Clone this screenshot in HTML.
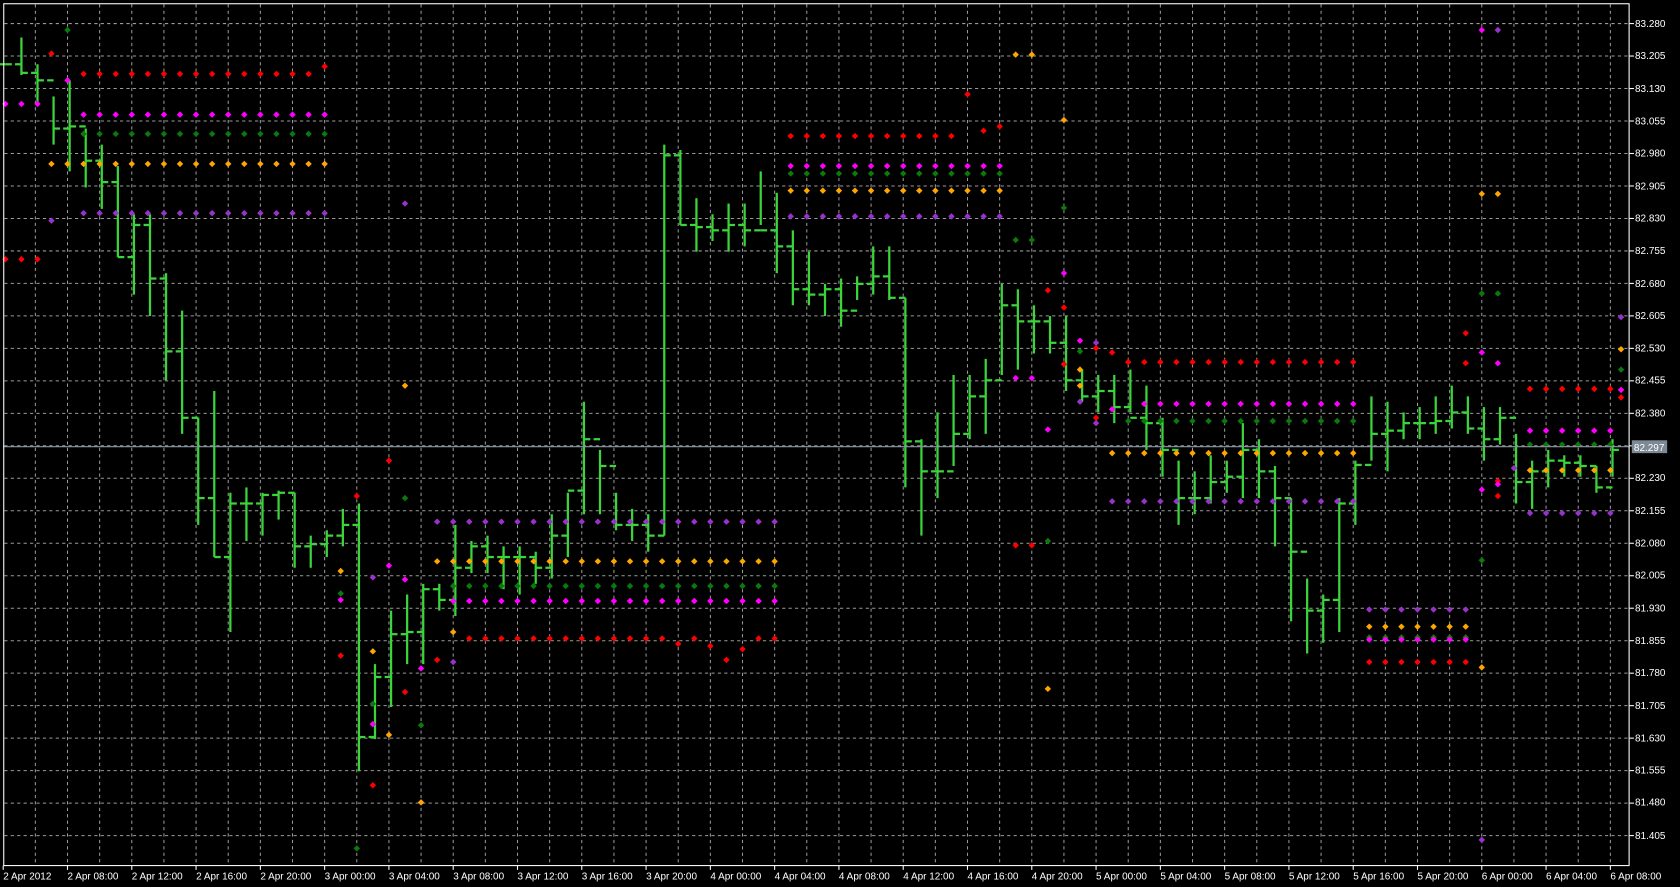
<!DOCTYPE html>
<html><head><meta charset="utf-8"><style>
html,body{margin:0;padding:0;background:#000;overflow:hidden}
svg{display:block}
text{font-family:"Liberation Sans",sans-serif;font-size:9.3px;fill:#fff}
</style></head><body>
<svg id="c" width="1680" height="887" viewBox="0 0 1568 828" preserveAspectRatio="none" xmlns="http://www.w3.org/2000/svg">
<rect x="0" y="0" width="1568" height="828" fill="#000"/>
<g id="grid"></g>
<g id="bars"></g>
<g id="dots"></g>
<line x1="3" y1="417" x2="1521" y2="417" stroke="#8a97a3" stroke-width="1"/>
<rect x="3.5" y="3.5" width="1517" height="804.5" fill="none" stroke="#fff" stroke-width="1"/>
<g id="ticks"></g>
<rect x="1523" y="411" width="33" height="12" fill="#7d8a95"/>
<text x="1525" y="421">82.297</text>
<g id="plabels">
<text x="1526" y="25">83.280</text><text x="1526" y="55">83.205</text><text x="1526" y="86">83.130</text><text x="1526" y="116">83.055</text><text x="1526" y="146">82.980</text><text x="1526" y="177">82.905</text><text x="1526" y="207">82.830</text><text x="1526" y="237">82.755</text><text x="1526" y="268">82.680</text><text x="1526" y="298">82.605</text><text x="1526" y="328">82.530</text><text x="1526" y="358">82.455</text><text x="1526" y="389">82.380</text><text x="1526" y="449">82.230</text><text x="1526" y="480">82.155</text><text x="1526" y="510">82.080</text><text x="1526" y="540">82.005</text><text x="1526" y="571">81.930</text><text x="1526" y="601">81.855</text><text x="1526" y="631">81.780</text><text x="1526" y="662">81.705</text><text x="1526" y="692">81.630</text><text x="1526" y="722">81.555</text><text x="1526" y="752">81.480</text><text x="1526" y="783">81.405</text>
</g>
<g id="tlabels">
<text x="3" y="821">2 Apr 2012</text><text x="63" y="821">2 Apr 08:00</text><text x="123" y="821">2 Apr 12:00</text><text x="183" y="821">2 Apr 16:00</text><text x="243" y="821">2 Apr 20:00</text><text x="303" y="821">3 Apr 00:00</text><text x="363" y="821">3 Apr 04:00</text><text x="423" y="821">3 Apr 08:00</text><text x="483" y="821">3 Apr 12:00</text><text x="543" y="821">3 Apr 16:00</text><text x="603" y="821">3 Apr 20:00</text><text x="663" y="821">4 Apr 00:00</text><text x="723" y="821">4 Apr 04:00</text><text x="783" y="821">4 Apr 08:00</text><text x="843" y="821">4 Apr 12:00</text><text x="903" y="821">4 Apr 16:00</text><text x="963" y="821">4 Apr 20:00</text><text x="1023" y="821">5 Apr 00:00</text><text x="1083" y="821">5 Apr 04:00</text><text x="1143" y="821">5 Apr 08:00</text><text x="1203" y="821">5 Apr 12:00</text><text x="1263" y="821">5 Apr 16:00</text><text x="1323" y="821">5 Apr 20:00</text><text x="1383" y="821">6 Apr 00:00</text><text x="1443" y="821">6 Apr 04:00</text><text x="1503" y="821">6 Apr 08:00</text>
</g>
</svg>
<script>
var NS="http://www.w3.org/2000/svg";
function el(p,t,a){var e=document.createElementNS(NS,t);for(var k in a)e.setAttribute(k,a[k]);document.getElementById(p).appendChild(e);}
for(var x=33;x<1521;x+=30)el("grid","line",{x1:x,y1:4,x2:x,y2:808,stroke:"#9a9a9a","stroke-width":0.95,"stroke-dasharray":"3,3"});
for(var i=0;i<26;i++){var y=22+i*30.32;el("grid","line",{x1:4,y1:y,x2:1521,y2:y,stroke:"#9a9a9a","stroke-width":0.95,"stroke-dasharray":"3,3"});el("ticks","line",{x1:1521,y1:y,x2:1525,y2:y,stroke:"#fff","stroke-width":1});}
for(var i=0;i<26;i++){var x=3+i*60;el("ticks","line",{x1:x,y1:808,x2:x,y2:812,stroke:"#fff","stroke-width":1});}
var B=[[60,60,60],[35,70,68],[60,95,75],[90,135,120],[75,160,118],[120,175,150],[135,195,170],[155,240,240],[200,275,210],[200,295,260],[255,355,328],[290,405,390],[390,490,465],[365,520,520],[460,590,470],[455,505,470],[460,500,462],[458,485,460],[460,530,510],[500,530,508],[495,520,500],[475,510,490],[470,720,688],[620,690,632],[570,660,592],[555,620,590],[545,620,550],[545,570,560],[490,575,530],[505,535,510],[500,535,520],[510,550,520],[510,555,520],[515,545,530],[480,540,500],[460,520,458],[375,480,410],[420,480,435],[460,495,490],[475,505,490],[480,515,500],[135,500,145],[140,210,210],[185,235,212],[200,225,215],[190,235,210],[190,230,215],[160,210,215],[180,255,230],[215,285,270],[235,285,275],[265,295,270],[260,305,290],[258,280,265],[230,275,258],[230,280,278],[278,455,412],[410,500,440],[385,465,440],[350,435,405],[350,410,370],[335,405,355],[265,350,285],[270,345,300],[285,330,300],[295,330,320],[295,365,355],[345,375,370],[350,385,365],[350,395,380],[345,385,390],[360,420,395],[390,445,420],[430,490,465],[440,480,465],[425,470,450],[430,460,445],[395,465,420],[410,465,440],[435,510,465],[465,580,515],[540,610,570],[555,600,560],[465,590,470],[430,490,434],[370,430,405],[375,440,402],[385,410,395],[380,410,395],[370,405,393],[360,400,385],[370,405,400],[380,430,410],[380,415,390],[405,470,450],[430,475,440],[420,455,430],[425,445,432],[425,445,435],[435,460,455],[410,445,420]];
var prev=60,G="#3bd43b";
B.forEach(function(b,i){var x=5+i*15;el("bars","line",{x1:x,y1:b[0],x2:x,y2:b[1],stroke:G,"stroke-width":2.1});
el("bars","line",{x1:x-6,y1:prev,x2:x,y2:prev,stroke:G,"stroke-width":2.1});
el("bars","line",{x1:x,y1:b[2],x2:x+6,y2:b[2],stroke:G,"stroke-width":2.1});prev=b[2];});
var C={r:"#ff0000",m:"#ff00ff",g:"#0b7a0b",o:"#ffa500",p:"#9932cc"};
function d(c,x,y){el("dots","path",{d:"M"+x+" "+(y-3)+"L"+(x+3)+" "+y+"L"+x+" "+(y+3)+"L"+(x-3)+" "+y+"Z",fill:C[c]});}
function s(c,y,x0,x1){for(var x=x0;x<=x1;x+=15)d(c,x,y);}
s("r",69,78,288);s("m",107,78,303);s("g",125,78,303);s("o",153,48,303);s("p",199,78,303);
d("r",303,62);
s("r",242,5,35);s("m",97,5,35);d("r",48,50);d("m",63,75);d("g",63,28);d("p",48,206);
[["r",333,463],["g",318,554],["o",318,533],["m",318,560],["r",318,612],["o",348,608],["g",348,657],["m",348,676],["o",363,686],["r",348,733],["g",333,792],["r",363,430],["g",378,465],["p",378,190],["o",378,360],["m",363,528],["p",348,539],["m",378,541],["r",378,646],["g",393,677],["o",393,749],["m",393,624],["r",408,616],["p",423,618],["o",423,590]].forEach(function(a){d(a[0],a[1],a[2]);});
s("p",487,408,723);s("o",524,408,723);s("g",547,423,723);s("m",561,423,723);s("r",596,438,618);
[["r",633,601],["r",648,596],["r",663,603],["r",678,616],["r",693,606],["r",708,596],["r",723,596]].forEach(function(a){d(a[0],a[1],a[2]);});
s("r",127,738,888);s("m",155,738,933);s("g",162,738,933);s("o",178,738,933);s("p",202,738,933);
[["r",903,88],["r",918,122],["r",933,118],["o",948,51],["o",963,51],["g",948,224],["g",963,224],["o",993,112],["g",993,194],["m",993,255],["r",978,271],["r",993,287],["r",963,509],["r",948,509],["g",978,505],["o",978,643],["m",948,353],["m",963,353],["m",978,401],["m",1008,318],["p",1023,320],["o",1008,345],["g",1008,328],["r",993,340],["o",1008,360],["p",1008,375],["r",1023,325],["r",1038,329],["r",1023,390],["m",1038,382],["p",1023,395]].forEach(function(a){d(a[0],a[1],a[2]);});
s("r",338,1053,1263);s("m",377,1068,1263);s("g",393,1053,1263);s("o",423,1038,1263);s("p",468,1038,1263);
s("p",569,1278,1368);s("o",585,1278,1368);s("g",595,1278,1368);s("m",597,1278,1368);s("r",618,1278,1368);d("o",1383,623);
[["m",1383,28],["p",1398,28],["o",1383,181],["o",1398,181],["g",1383,274],["g",1398,274],["m",1398,339],["m",1383,329],["r",1368,339],["p",1383,784],["r",1398,463],["m",1383,457],["g",1383,523],["r",1368,311],["r",1398,449],["m",1398,452],["p",1413,437]].forEach(function(a){d(a[0],a[1],a[2]);});
s("r",363,1428,1503);s("m",402,1428,1503);s("g",415,1428,1503);s("o",439,1428,1503);s("p",479,1428,1503);
[["p",1513,296],["o",1513,326],["g",1513,345],["m",1513,364],["r",1513,371]].forEach(function(a){d(a[0],a[1],a[2]);});
</script>
</body></html>
